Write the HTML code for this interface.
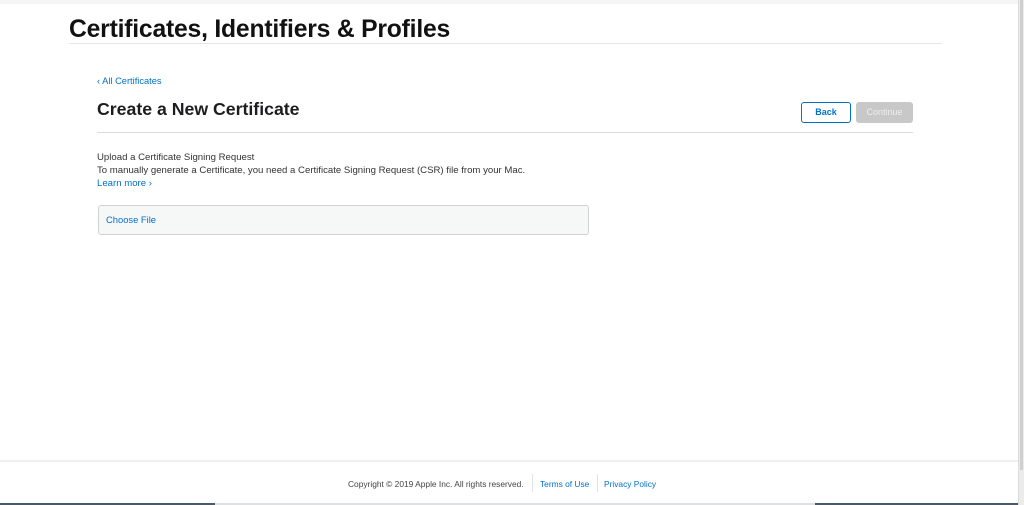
<!DOCTYPE html>
<html><head><meta charset="utf-8"><style>
*{margin:0;padding:0;box-sizing:border-box}
body{width:1024px;height:505px;overflow:hidden;background:#fff;font-family:"Liberation Sans",sans-serif;position:relative;color:#1d1d1f}
.top{position:absolute;left:0;top:0;width:1024px;height:4px;background:#f5f5f5}
.sb{position:absolute;right:0;top:0;width:6px;height:505px;background:#ececec;border-left:1px solid #dadada}
.sb:after{content:"";position:absolute;left:1px;top:0;width:3px;height:470px;background:#cfcfcf}
h1{position:absolute;left:69px;top:16px;font-size:24.7px;font-weight:bold;letter-spacing:-0.2px;color:#111}
.hl{position:absolute;left:69px;top:43px;width:873px;height:1px;background:#e6e6e6}
.a{color:#0070c9}
.back{position:absolute;left:97px;top:76px;font-size:9.3px}
h2{position:absolute;left:97px;top:99px;font-size:17.7px;font-weight:bold;color:#1d1d1f}
.b1{position:absolute;left:801px;top:102px;width:50px;height:21px;border:1px solid #0070c9;border-radius:3px;color:#0070c9;font-size:9px;text-align:center;line-height:19px;font-weight:bold}
.b2{position:absolute;left:856px;top:102px;width:57px;height:21px;background:#c8c8c8;border-radius:3px;color:#eee;font-size:9px;text-align:center;line-height:21px}
.l2{position:absolute;left:97px;top:132px;width:816px;height:1px;background:#dcdcdc}
.t1{position:absolute;left:97px;top:151px;font-size:9.6px;color:#333;line-height:13px}
.file{position:absolute;left:98px;top:205px;width:491px;height:30px;border:1px solid #d2d2d2;border-radius:3px;background:#f6f7f7;font-size:9.4px;color:#0070c9;padding-left:7px;line-height:28px}
.foot{position:absolute;left:0;top:460px;width:1018px;height:43px;border-top:2px solid #f0f0f0;background:#fff;font-size:8.4px;color:#444}
.foot span{position:absolute;top:17px}
.sep{position:absolute;top:12px;width:1px;height:18px;background:#e2e2e2}
.bar{position:absolute;left:0;top:503px;width:1024px;height:2px;background:#4a5a66}
.bar2{position:absolute;left:215px;top:503px;width:600px;height:2px;background:#dde1e4}
</style></head><body>
<div class="top"></div>
<h1>Certificates, Identifiers &amp; Profiles</h1>
<div class="hl"></div>
<div class="back a">‹ All Certificates</div>
<h2>Create a New Certificate</h2>
<div class="b1">Back</div>
<div class="b2">Continue</div>
<div class="l2"></div>
<div class="t1">Upload a Certificate Signing Request<br>To manually generate a Certificate, you need a Certificate Signing Request (CSR) file from your Mac.<br><span class="a">Learn more ›</span></div>
<div class="file">Choose File</div>
<div class="foot">
<span style="left:348px">Copyright © 2019 Apple Inc. All rights reserved.</span>
<div class="sep" style="left:532px"></div>
<span class="a" style="left:540px">Terms of Use</span>
<div class="sep" style="left:597px"></div>
<span class="a" style="left:604px">Privacy Policy</span>
</div>
<div class="bar"></div><div class="bar2"></div>
<div class="sb"></div>
</body></html>
